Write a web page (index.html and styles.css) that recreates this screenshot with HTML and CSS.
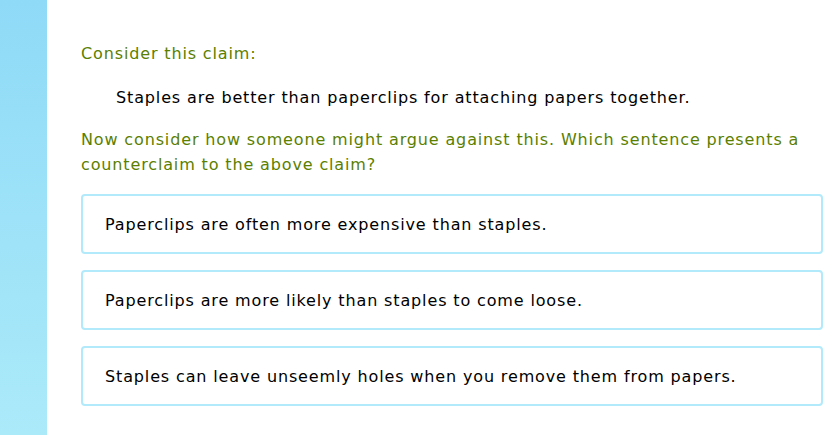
FILE: index.html
```html
<!DOCTYPE html>
<html lang="en">
<head>
<meta charset="utf-8">
<title>Counterclaim</title>
<link rel="stylesheet" href="styles.css">
</head>
<body>
<div class="page">
  <aside class="sidebar"></aside>
  <main class="content">
    <p class="prompt">Consider this claim:</p>
    <p class="claim">Staples are better than paperclips for attaching papers together.</p>
    <p class="prompt question">Now consider how someone might argue against this. Which sentence presents a counterclaim to the above claim?</p>
    <div class="choices">
      <div class="choice">Paperclips are often more expensive than staples.</div>
      <div class="choice">Paperclips are more likely than staples to come loose.</div>
      <div class="choice">Staples can leave unseemly holes when you remove them from papers.</div>
    </div>
  </main>
</div>
</body>
</html>
```

FILE: styles.css
```css
html, body {
  margin: 0;
  padding: 0;
  background: #ffffff;
}
body {
  font-family: "DejaVu Sans", Verdana, sans-serif;
  font-size: 16px;
  line-height: 25px;
  letter-spacing: 0.86px;
  color: #000000;
}
.page {
  display: flex;
  min-height: 435px;
}
.sidebar {
  width: 47px;
  flex: 0 0 47px;
  background: linear-gradient(to bottom, #8fdaf7 0%, #abeaf9 100%);
}
.content {
  flex: 1;
  padding: 41px 11px 20px 34px;
}
.prompt {
  margin: 0;
  color: #5b8000;
}
.claim {
  margin: 19px 0 17px 35px;
}
.question {
  margin-bottom: 17px;
}
.choices {
  display: flex;
  flex-direction: column;
  gap: 16px;
}
.choice {
  border: 2px solid #b2e9fb;
  border-radius: 4px;
  padding: 17px 21px 15px 22px;
  line-height: 24px;
  background: #ffffff;
}
```
